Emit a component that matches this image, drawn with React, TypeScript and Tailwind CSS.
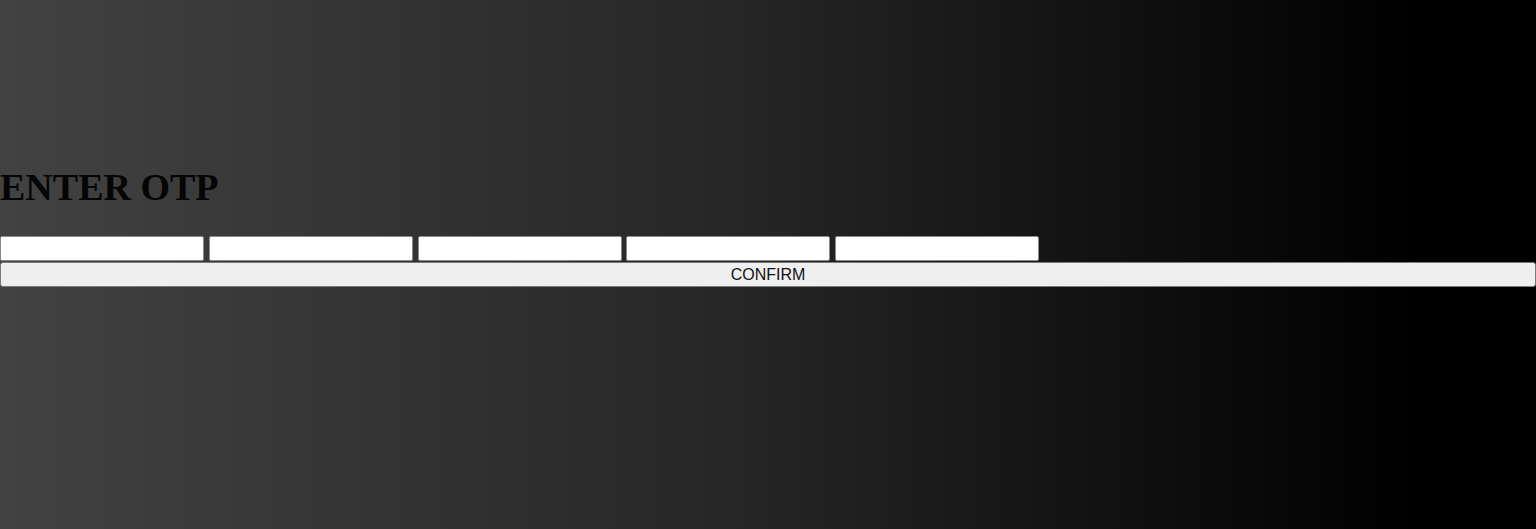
import React from 'react';

export default function App() {
  const boxes = [0, 1, 2, 3, 4];

  return (
    <div className="min-h-[529px] w-full bg-[linear-gradient(to_right,#424242_0%,#262626_48%,#000000_92%)] pt-[166px] font-['Liberation_Sans',Arial,sans-serif]">
      <h1 className="font-['Liberation_Serif','Times_New_Roman',serif] text-[38px] font-bold leading-[42px] text-[#050505]">
        ENTER OTP
      </h1>

      {/* OTP inputs */}
      <div className="mt-[28px] flex gap-[4.75px]">
        {boxes.map((i) => (
          <input
            key={i}
            type="text"
            maxLength={1}
            className="h-[25px] w-[204px] rounded-[2px] border border-[#8a8a8a] bg-white px-1 text-[16px] outline-none"
          />
        ))}
      </div>

      <button className="mt-px block h-[25px] w-full rounded-[3px] border border-[#7a7a7a] bg-[#efefef] text-[16px] leading-[23px] text-[#111]">
        CONFIRM
      </button>
    </div>
  );
}
